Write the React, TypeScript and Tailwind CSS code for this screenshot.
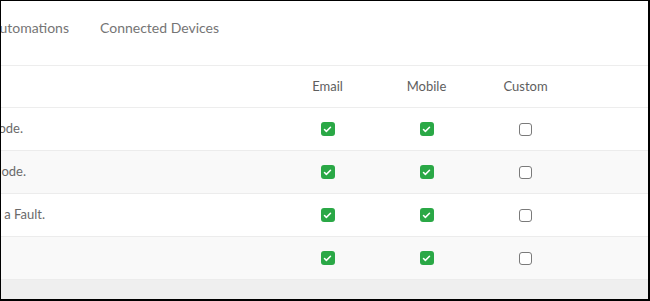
import { Check } from 'lucide-react'

// Notification settings table, scrolled horizontally so the left edge is clipped.

type Row = { label: string; email: boolean; mobile: boolean; custom: boolean; end: string }

const ROWS: Row[] = [
  { label: 'The system was armed in Away Mode.', email: true, mobile: true, custom: false, end: 'w-[22px]' },
  { label: 'The system was armed in Home Mode.', email: true, mobile: true, custom: false, end: 'w-[25px]' },
  { label: 'A sensor has reported a Fault.', email: true, mobile: true, custom: false, end: 'w-[44px]' },
  { label: 'Alarm triggered.', email: true, mobile: true, custom: false, end: 'w-0' },
]

function Box({ checked }: { checked: boolean }) {
  if (checked) {
    return (
      <span className="flex h-[14px] w-[14px] items-center justify-center rounded-[3px] bg-[#2aa846]">
        <Check className="h-[9px] w-[9px] text-white" strokeWidth={4} aria-hidden="true" />
      </span>
    )
  }
  return <span className="block h-[13px] w-[13px] rounded-[3px] border-[1.5px] border-[#7a7a7a] bg-white" />
}

// Text whose start is scrolled out of view: keep the end at a fixed x, clip the rest.
function Clipped({ text, end }: { text: string; end: string }) {
  return (
    <div className={`flex shrink-0 justify-end overflow-hidden ${end}`}>
      <span className="whitespace-nowrap">{text}</span>
    </div>
  )
}

export default function App() {
  return (
    <div
      className="flex h-[301px] w-[650px] flex-col overflow-hidden border-b-2 border-l border-r-2 border-t border-black bg-white text-[#6a6a6a]"
      style={{ fontFamily: 'Lato, "Open Sans", sans-serif' }}
    >
      {/* ── Tabs ─────────────────────────────────────────────── */}
      <div className="flex h-[65px] shrink-0 items-center gap-[31px] border-b border-[#ededed] pb-[12px] text-[14px] text-[#757575]">
        <Clipped text="Automations" end="w-[68px]" />
        <span className="whitespace-nowrap">Connected Devices</span>
      </div>

      {/* ── Header ───────────────────────────────────────────── */}
      <div className="grid h-[42px] shrink-0 grid-cols-[277px_99px_99px_99px_1fr] items-center border-b border-[#ededed] text-[13px] text-[#5e5e5e]">
        <span />
        <span className="text-center">Email</span>
        <span className="text-center">Mobile</span>
        <span className="text-center">Custom</span>
        <span />
      </div>

      {/* ── Rows ─────────────────────────────────────────────── */}
      {ROWS.map((row, i) => (
        <div
          key={row.label}
          className={`grid h-[43px] shrink-0 grid-cols-[277px_99px_99px_99px_1fr] items-center border-b border-[#ececec] text-[13px] ${
            i % 2 === 1 ? 'bg-[#f9f9f9]' : 'bg-white'
          }`}
        >
          <Clipped text={row.label} end={row.end} />
          <span className="flex justify-center"><Box checked={row.email} /></span>
          <span className="flex justify-center"><Box checked={row.mobile} /></span>
          <span className="flex justify-center"><Box checked={row.custom} /></span>
          <span />
        </div>
      ))}

      {/* ── Footer ───────────────────────────────────────────── */}
      <div className="flex-1 bg-[#efefef]" />
    </div>
  )
}
